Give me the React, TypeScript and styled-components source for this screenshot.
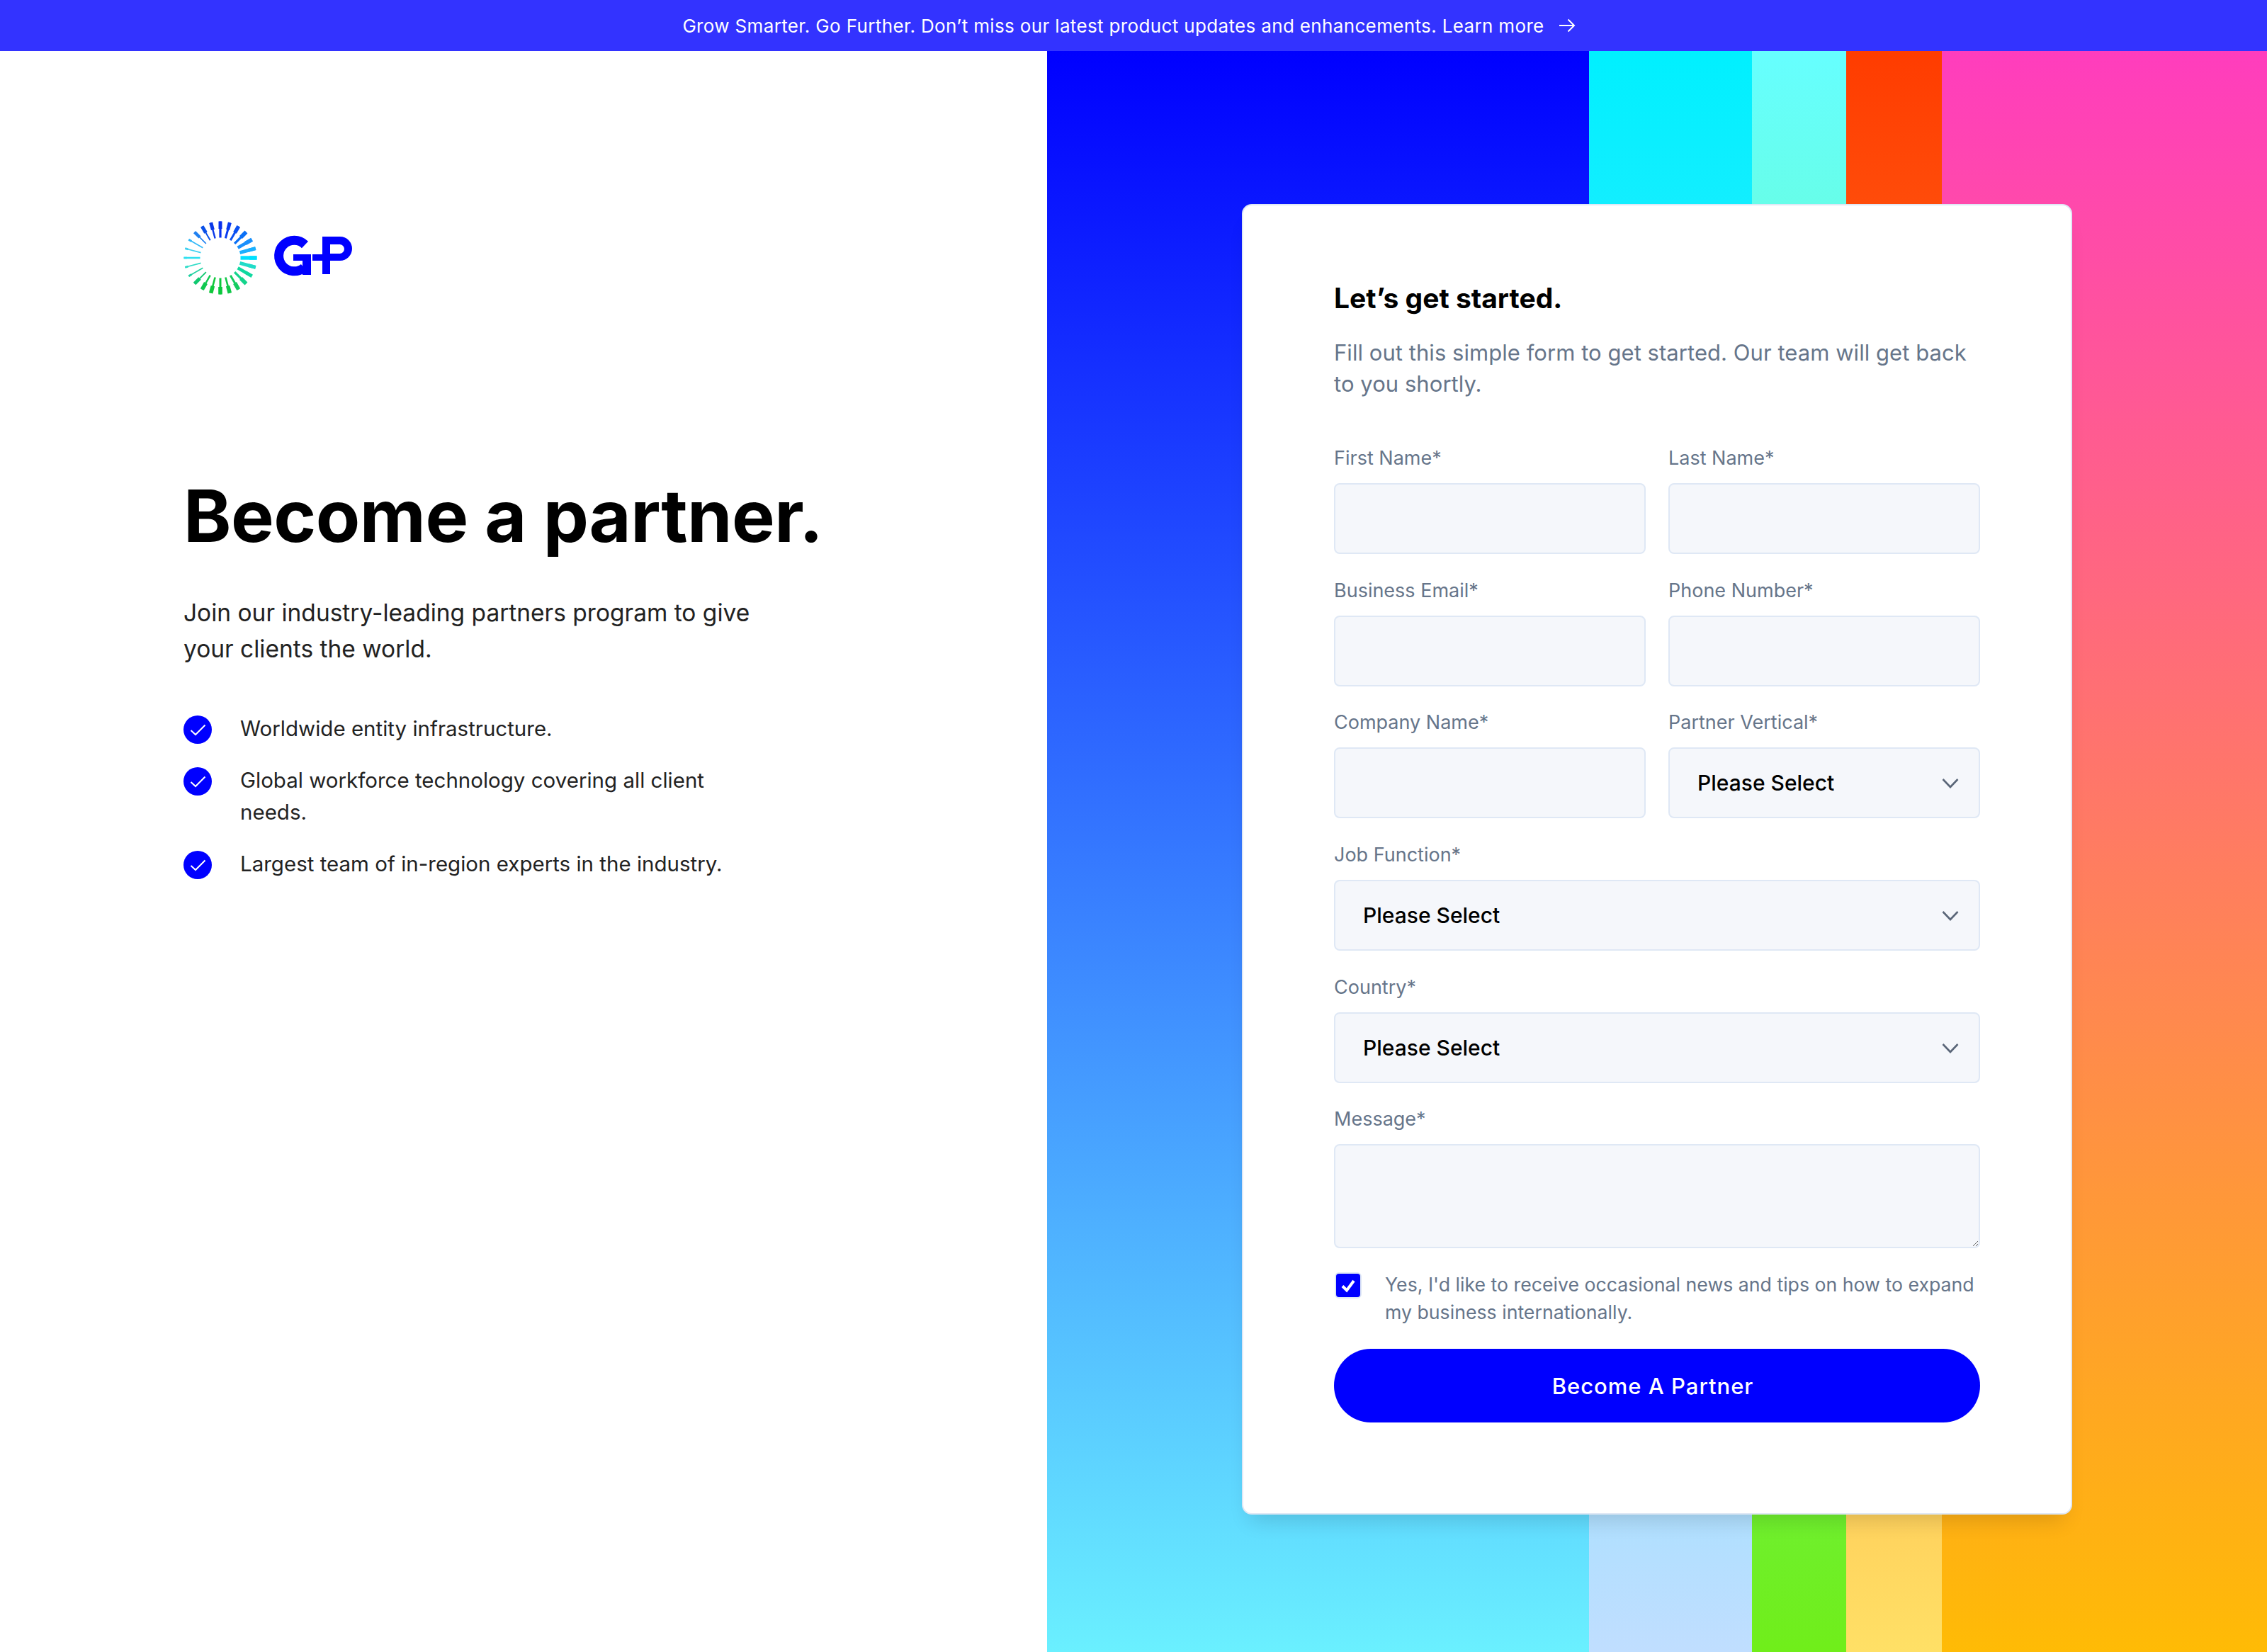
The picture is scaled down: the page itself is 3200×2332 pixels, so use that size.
import React from 'react';
import styled, { createGlobalStyle } from 'styled-components';

const GlobalStyle = createGlobalStyle`
  * {
    box-sizing: border-box;
  }

  body {
    margin: 0;
    background: #FFFFFF;
    font-family: Inter, "Liberation Sans", sans-serif;
  }
`;

const Page = styled.div`
  display: flex;
  flex-direction: column;
  width: 3200px;
  height: 2332px;
  overflow: hidden;
`;

const Banner = styled.a`
  display: flex;
  justify-content: center;
  align-items: center;
  gap: 20px;
  flex: 0 0 72px;
  padding-right: 13px;
  background: #3333FF;
  color: #FFFFFF;
  font-size: 26px;
  letter-spacing: 0.35px;
  text-decoration: none;
`;

const Main = styled.main`
  display: flex;
  flex: 1;
`;

const Intro = styled.section`
  flex: 0 0 1478px;
  padding: 240px 0 0 259px;
`;

const Heading = styled.h1`
  margin: 247px 0 0;
  font-size: 102px;
  font-weight: 700;
  line-height: 130px;
  letter-spacing: -0.5px;
  color: #000000;
`;

const Lead = styled.p`
  width: 830px;
  margin: 47px 0 0;
  font-size: 33.5px;
  line-height: 51px;
  color: #222222;
`;

const BenefitList = styled.ul`
  display: flex;
  flex-direction: column;
  gap: 28px;
  width: 790px;
  margin: 64px 0 0;
  padding: 0;
  list-style: none;
`;

const Benefit = styled.li`
  display: flex;
  gap: 40px;
  font-size: 29.5px;
  line-height: 45px;
  color: #222222;
`;

const BenefitIcon = styled.svg`
  flex: 0 0 40px;
  width: 40px;
  height: 40px;
  margin-top: 4px;
`;

const Visual = styled.section`
  position: relative;
  display: flex;
  flex: 1;
`;

const Stripe = styled.div<{ $width?: number; $from: string; $to: string }>`
  flex: ${(p) => (p.$width ? `0 0 ${p.$width}px` : '1')};
  background: linear-gradient(180deg, ${(p) => p.$from} 0%, ${(p) => p.$to} 100%);
`;

const Card = styled.form`
  position: absolute;
  top: 216px;
  left: 275px;
  width: 1172px;
  padding: 107px 128px 128px;
  background: #FFFFFF;
  border: 2px solid #DFE8F5;
  border-radius: 14px;
  box-shadow: 0 20px 30px -12px rgba(0, 0, 0, 0.14);
`;

const CardTitle = styled.h2`
  margin: 0;
  font-size: 39px;
  font-weight: 700;
  line-height: 48px;
  color: #000000;
`;

const CardText = styled.p`
  margin: 31px 0 65px;
  font-size: 31px;
  line-height: 44px;
  letter-spacing: 0.05px;
  color: #66758A;
`;

const FieldGrid = styled.div`
  display: grid;
  grid-template-columns: 440px 440px;
  gap: 33.7px 32px;
`;

const Field = styled.label<{ $wide?: boolean }>`
  position: relative;
  display: flex;
  flex-direction: column;
  gap: 17px;
  grid-column: ${(p) => (p.$wide ? '1 / span 2' : 'auto')};
`;

const FieldLabel = styled.span`
  font-size: 27px;
  line-height: 36px;
  color: #66758A;
`;

const TextInput = styled.input`
  height: 100px;
  padding: 0 40px;
  background: #F5F7FB;
  border: 2px solid #DFE8F5;
  border-radius: 8px;
  outline: none;
  font: inherit;
`;

const SelectInput = styled.select`
  appearance: none;
  height: 100px;
  padding: 0 39px;
  background: #F5F7FB;
  border: 2px solid #DFE8F5;
  border-radius: 8px;
  outline: none;
  font-family: Inter, "Liberation Sans", sans-serif;
  font-size: 30px;
  font-weight: 500;
  color: #000000;
`;

const MessageInput = styled.textarea`
  display: block;
  height: 147px;
  padding: 20px 40px;
  background: #F5F7FB;
  border: 2px solid #DFE8F5;
  border-radius: 8px;
  outline: none;
  font: inherit;
`;

const Chevron = styled.svg`
  position: absolute;
  right: 30px;
  bottom: 42px;
  width: 24px;
  height: 15px;
  pointer-events: none;
`;

const ConsentRow = styled.div`
  display: flex;
  align-items: flex-start;
  gap: 33px;
  margin-top: 32px;
  padding-left: 1px;
`;

const ConsentBox = styled.span`
  display: flex;
  justify-content: center;
  align-items: center;
  flex: 0 0 38px;
  height: 37px;
  margin-top: 2px;
  background: #0000FF;
  border: 2px solid #DFE8F5;
  border-radius: 6px;
`;

const ConsentText = styled.span`
  flex: 1;
  font-size: 26.7px;
  line-height: 39px;
  color: #66758A;
`;

const SubmitButton = styled.button`
  display: block;
  width: 100%;
  height: 104px;
  margin-top: 32px;
  padding: 0 12px 0 0;
  background: #0000FF;
  border: none;
  border-radius: 52px;
  color: #FFFFFF;
  font-family: Inter, "Liberation Sans", sans-serif;
  font-size: 31px;
  font-weight: 500;
  letter-spacing: 1px;
  cursor: pointer;
`;

// width of each ray: inner part, outer tip, clockwise from 12 o'clock
const rays: [number, number, string][] = [
  [3.2, 5, '#0A30EE'],
  [3, 5, '#0A3CF0'],
  [3, 5.4, '#0A50F2'],
  [3.4, 5.6, '#0A70F6'],
  [4.4, 5.6, '#1A90FC'],
  [5, 5, '#1AB0FF'],
  [5.4, 5.4, '#00E0FF'],
  [5, 5, '#20DCC8'],
  [4.4, 4.8, '#10D8A0'],
  [3.4, 5.6, '#14D48C'],
  [3, 5.6, '#14CC60'],
  [2.6, 5.6, '#10C848'],
  [3, 5.6, '#0AC83C'],
  [2.6, 5.6, '#10C83C'],
  [2.4, 5.6, '#10C850'],
  [1.8, 5, '#10C870'],
  [1.6, 3, '#20D0A0'],
  [1.6, 2.8, '#30DCC8'],
  [2.6, 2.6, '#30E0F0'],
  [1.6, 2.8, '#40D0F0'],
  [1.6, 3, '#30B8F8'],
  [1.6, 4.4, '#2080F0'],
  [2, 5, '#0A50E8'],
  [2.4, 5, '#0A38E8'],
];

const Logo = styled.svg`
  display: block;
  width: 240px;
  height: 104px;
`;

const GpLogo: React.FC = () => (
  <Logo viewBox="0 0 240 104">
    {rays.map(([inner, outer, color], i) => {
      const angle = (i * 15 * Math.PI) / 180;
      const dx = Math.sin(angle);
      const dy = -Math.cos(angle);
      const cx = 52;
      const cy = 52;
      const tipFrom = outer > 3 ? 41 : 47;
      return (
        <g key={i} stroke={color}>
          <line x1={cx + dx * 28.5} y1={cy + dy * 28.5} x2={cx + dx * 51.5} y2={cy + dy * 51.5} strokeWidth={inner} />
          <line x1={cx + dx * tipFrom} y1={cy + dy * tipFrom} x2={cx + dx * 51.5} y2={cy + dy * 51.5} strokeWidth={outer} />
        </g>
      );
    })}
    <path d="M171.5 33.5A21.75 21.75 0 1 0 170 66" fill="none" stroke="#0000FF" strokeWidth="13" />
    <path d="M155 47H180V76H168V56H155Z" fill="#0000FF" />
    <path d="M182 47H196V22H221A17 17 0 0 1 221 56H207V75H196V56H182ZM207 33V46H220.5A6.5 6.5 0 0 0 220.5 33Z" fill="#0000FF" fillRule="evenodd" />
  </Logo>
);

const CheckMark: React.FC = () => (
  <BenefitIcon viewBox="0 0 40 40">
    <circle cx="20" cy="20" r="20" fill="#0000FF" />
    <path d="M10.5 21L17 27L30.5 13.5" fill="none" stroke="#FFFFFF" strokeWidth="2" />
  </BenefitIcon>
);

const DownChevron: React.FC = () => (
  <Chevron viewBox="0 0 24 15">
    <path d="M1.5 2L12 13L22.5 2" fill="none" stroke="#5A6678" strokeWidth="2.6" />
  </Chevron>
);

const benefits = [
  'Worldwide entity infrastructure.',
  'Global workforce technology covering all client needs.',
  'Largest team of in-region experts in the industry.',
];

const App: React.FC = () => {
  return (
    <Page>
      <GlobalStyle />
      <Banner href="#">
        Grow Smarter. Go Further. Don’t miss our latest product updates and enhancements. Learn more
        <svg width="24" height="20" viewBox="0 0 24 20">
          <path d="M1 10H22M13.5 1.5L22 10L13.5 18.5" fill="none" stroke="#FFFFFF" strokeWidth="2" />
        </svg>
      </Banner>
      <Main>
        <Intro>
          <GpLogo />
          <Heading>Become a partner.</Heading>
          <Lead>Join our industry-leading partners program to give your clients the world.</Lead>
          <BenefitList>
            {benefits.map((text) => (
              <Benefit key={text}>
                <CheckMark />
                <span>{text}</span>
              </Benefit>
            ))}
          </BenefitList>
        </Intro>
        <Visual>
          <Stripe $width={765} $from="#0000FF" $to="#6AF0FF" />
          <Stripe $width={230} $from="#00F0FF" $to="#C0DEFF" />
          <Stripe $width={133} $from="#66FFFF" $to="#70EE1A" />
          <Stripe $width={135} $from="#FF3C00" $to="#FFE066" />
          <Stripe $from="#FF3DBD" $to="#FFBB05" />
          <Card>
            <CardTitle>Let’s get started.</CardTitle>
            <CardText>
              Fill out this simple form to get started. Our team will get back to you shortly.
            </CardText>
            <FieldGrid>
              <Field>
                <FieldLabel>First Name*</FieldLabel>
                <TextInput type="text" />
              </Field>
              <Field>
                <FieldLabel>Last Name*</FieldLabel>
                <TextInput type="text" />
              </Field>
              <Field>
                <FieldLabel>Business Email*</FieldLabel>
                <TextInput type="email" />
              </Field>
              <Field>
                <FieldLabel>Phone Number*</FieldLabel>
                <TextInput type="tel" />
              </Field>
              <Field>
                <FieldLabel>Company Name*</FieldLabel>
                <TextInput type="text" />
              </Field>
              <Field>
                <FieldLabel>Partner Vertical*</FieldLabel>
                <SelectInput>
                  <option>Please Select</option>
                </SelectInput>
                <DownChevron />
              </Field>
              <Field $wide>
                <FieldLabel>Job Function*</FieldLabel>
                <SelectInput>
                  <option>Please Select</option>
                </SelectInput>
                <DownChevron />
              </Field>
              <Field $wide>
                <FieldLabel>Country*</FieldLabel>
                <SelectInput>
                  <option>Please Select</option>
                </SelectInput>
                <DownChevron />
              </Field>
              <Field $wide>
                <FieldLabel>Message*</FieldLabel>
                <MessageInput />
              </Field>
            </FieldGrid>
            <ConsentRow>
              <ConsentBox>
                <svg width="24" height="20" viewBox="0 0 24 20">
                  <path d="M4 10.5L10 16.5L20 3" fill="none" stroke="#FFFFFF" strokeWidth="4" />
                </svg>
              </ConsentBox>
              <ConsentText>
                Yes, I'd like to receive occasional news and tips on how to expand my business internationally.
              </ConsentText>
            </ConsentRow>
            <SubmitButton type="button">Become A Partner</SubmitButton>
          </Card>
        </Visual>
      </Main>
    </Page>
  );
};

export default App;
